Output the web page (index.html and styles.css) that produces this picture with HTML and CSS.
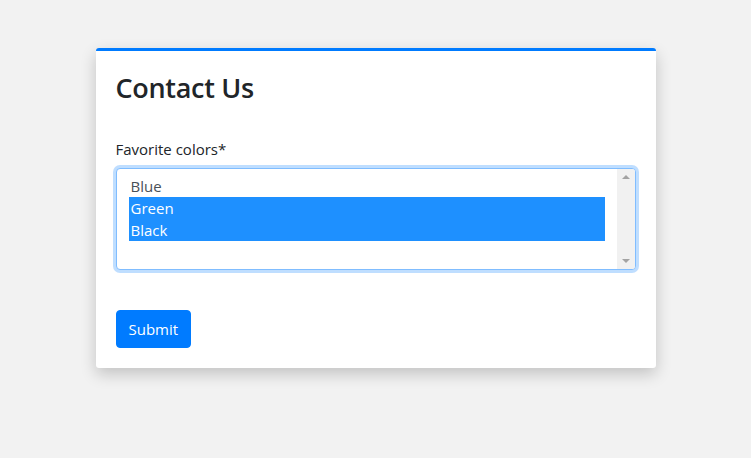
FILE: index.html
```html
<!DOCTYPE html>
<html lang="en">
<head>
<meta charset="utf-8">
<title>Contact Us</title>
<link rel="stylesheet" href="styles.css">
</head>
<body>
<main class="card">
  <h3 class="title">Contact Us</h3>
  <form class="form">
    <div class="form-group">
      <label class="label" id="colors-label">Favorite colors*</label>
      <div class="listbox" role="listbox" aria-multiselectable="true" aria-labelledby="colors-label">
        <div class="options">
          <div class="option" role="option" aria-selected="false">Blue</div>
          <div class="option selected" role="option" aria-selected="true">Green</div>
          <div class="option selected" role="option" aria-selected="true">Black</div>
        </div>
        <div class="scrollbar">
          <span class="arrow up"></span>
          <span class="arrow down"></span>
        </div>
      </div>
    </div>
    <button type="button" class="btn">Submit</button>
  </form>
</main>
</body>
</html>
```

FILE: styles.css
```css
* { box-sizing: border-box; }
html, body { margin: 0; padding: 0; }
html { background: #f2f2f2; }
body {
  font-family: "Open Sans", "Noto Sans", "Liberation Sans", sans-serif;
  color: #212529;
  padding-top: 48px;
  padding-bottom: 40px;
}
.card {
  width: 560px;
  margin: 0 auto;
  background: #fff;
  border-top: 3px solid #007bff;
  border-radius: 3px;
  box-shadow: 0 6px 16px rgba(0,0,0,0.2);
  padding: 20px 20px 20px;
}
.title {
  margin: 0 0 32px;
  font-size: 27px;
  font-weight: 600;
  line-height: 34px;
  color: #212529;
  letter-spacing: -0.3px;
}
.form-group { margin-bottom: 40px; }
.label {
  display: block;
  font-size: 15px;
  line-height: 24px;
  margin-bottom: 7px;
  color: #212529;
}
.listbox {
  display: flex;
  height: 102px;
  border: 1px solid #80bdff;
  border-radius: 4px;
  box-shadow: 0 0 0 3px rgba(0,123,255,0.25);
  background: #fff;
  overflow: hidden;
}
.options {
  flex: 1;
  padding: 6px 12px 0;
}
.option {
  height: 22px;
  line-height: 22px;
  padding: 0 2px;
  font-size: 15px;
  color: #495057;
}
.option.selected {
  background: #1e90ff;
  color: #fff;
}
.scrollbar {
  width: 18px;
  background: #f1f1f1;
  position: relative;
}
.arrow {
  position: absolute;
  left: 5px;
  width: 0;
  height: 0;
  border-left: 4px solid transparent;
  border-right: 4px solid transparent;
}
.arrow.up { top: 6px; border-bottom: 4px solid #a3a3a3; }
.arrow.down { bottom: 6px; border-top: 4px solid #a3a3a3; }
.btn {
  display: block;
  height: 38px;
  padding: 0 12px;
  border: 1px solid #007bff;
  border-radius: 4px;
  background: #007bff;
  color: #fff;
  font-family: inherit;
  font-size: 15px;
  line-height: 36px;
  cursor: pointer;
}
```
